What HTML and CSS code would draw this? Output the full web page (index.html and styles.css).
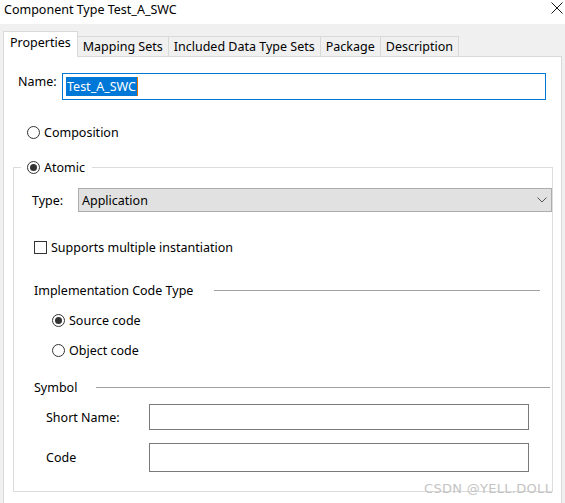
FILE: index.html
```html
<!doctype html>
<html>
  <head>
    <meta charset="UTF-8">
    <title>Component Type Test_A_SWC</title>
    <link rel="stylesheet" href="styles.css">
  </head>
  <body>
    <div class="window">
      <div class="titlebar">
        <span class="title">Component Type Test_A_SWC</span>
        <svg class="close" width="12" height="12" viewBox="0 0 12 12">
          <path d="M0.5 0.5 L11.5 11.5 M11.5 0.5 L0.5 11.5" stroke="#1a1a1a" stroke-width="1" fill="none"/>
        </svg>
      </div>

      <div class="dialog">
        <ul class="tabs">
          <li class="tab active">Properties</li>
          <li class="tab">Mapping Sets</li>
          <li class="tab">Included Data Type Sets</li>
          <li class="tab">Package</li>
          <li class="tab">Description</li>
        </ul>

        <div class="panel">
          <div class="nameRow">
            <label class="nameLabel">Name:</label>
            <div class="nameInput"><span class="selected">Test_A_SWC</span><span class="caret"></span></div>
          </div>

          <div class="radioRow composition">
            <span class="radio"></span>Composition
          </div>

          <fieldset class="atomic">
            <legend><span class="radio checked"></span>Atomic</legend>

            <div class="typeRow">
              <label class="typeLabel">Type:</label>
              <div class="select">
                <span>Application</span>
                <svg width="10" height="6" viewBox="0 0 10 6">
                  <path d="M0.5 0.5 L5 5 L9.5 0.5" stroke="#555" stroke-width="1" fill="none"/>
                </svg>
              </div>
            </div>

            <div class="checkRow">
              <span class="checkbox"></span>Supports multiple instantiation
            </div>

            <div class="sectionRow impl">
              <span>Implementation Code Type</span>
              <div class="rule"></div>
            </div>

            <div class="radioRow source">
              <span class="radio checked"></span>Source code
            </div>
            <div class="radioRow object">
              <span class="radio"></span>Object code
            </div>

            <div class="sectionRow symbol">
              <span>Symbol</span>
              <div class="rule"></div>
            </div>

            <div class="fieldRow shortName">
              <label>Short Name:</label>
              <div class="textBox"></div>
            </div>
            <div class="fieldRow code">
              <label>Code</label>
              <div class="textBox"></div>
            </div>
          </fieldset>

          <div class="watermark">CSDN @YELL.DOLL</div>
        </div>
      </div>
    </div>
  </body>
</html>
```

FILE: styles.css
```css
html, body {
  margin: 0;
  padding: 0;
}

body {
  width: 565px;
  height: 503px;
  overflow: hidden;
  background: #f0f0f0;
  font-family: "Noto Sans", "Open Sans", sans-serif;
  font-size: 12.5px;
  color: #000;
}

ul {
  list-style-type: none;
  margin: 0;
  padding: 0;
}

.window {
  display: flex;
  flex-direction: column;
  height: 503px;
}

.titlebar {
  height: 24px;
  background: white;
  display: flex;
  align-items: flex-start;
  justify-content: space-between;
  padding: 0 2px 0 4px;
}

.title {
  line-height: 20px;
}

.close {
  margin-top: 2px;
}

.dialog {
  flex: 1;
  display: flex;
  flex-direction: column;
  padding: 8px 3px 0 3px;
}

.tabs {
  display: flex;
  align-items: flex-end;
  height: 24px;
  position: relative;
  z-index: 1;
}

.tab {
  height: 19px;
  line-height: 19px;
  padding: 0 5px;
  border: 1px solid #d9d9d9;
  border-bottom: none;
  border-left: none;
  background: #f0f0f0;
}

.tab.active {
  height: 25px;
  line-height: 22px;
  padding: 0 6px;
  border-left: 1px solid #d9d9d9;
  background: white;
  margin-bottom: -1px;
}

.panel {
  flex: 1;
  position: relative;
  background: white;
  border: 1px solid #d9d9d9;
  border-bottom: none;
  padding-top: 16px;
}

.nameRow {
  display: flex;
  align-items: flex-start;
}

.nameLabel {
  width: 44px;
  padding-left: 14px;
  line-height: 16px;
  margin-top: 1px;
}

.nameInput {
  width: 479px;
  height: 25px;
  border: 1px solid #0078d7;
  display: flex;
  align-items: center;
  padding-left: 3px;
}

.selected {
  background: #0078d7;
  color: white;
  line-height: 19px;
  padding: 0 1px;
}

.caret {
  width: 1px;
  height: 19px;
  background: #e07000;
}

.radioRow {
  display: flex;
  align-items: center;
  height: 20px;
}

.radio {
  width: 11px;
  height: 11px;
  border: 1px solid #333;
  border-radius: 50%;
  margin-right: 4px;
  display: flex;
  align-items: center;
  justify-content: center;
  flex-shrink: 0;
}

.radio.checked::after {
  content: "";
  width: 7px;
  height: 7px;
  border-radius: 50%;
  background: #333;
}

.composition {
  margin-top: 22px;
  padding-left: 23px;
}

.atomic {
  margin: 15px 8px 0 9px;
  padding: 0 0 19px 0;
  border: 1px solid #dcdcdc;
  min-width: 0;
}

.atomic legend {
  display: flex;
  align-items: center;
  height: 20px;
  margin-left: 7px;
  padding: 0 7px 0 6px;
}

.typeRow {
  display: flex;
  align-items: center;
  margin-top: 11px;
}

.typeLabel {
  width: 46px;
  padding-left: 18px;
}

.select {
  flex: 1;
  height: 22px;
  background: #e1e1e1;
  border: 1px solid #adadad;
  display: flex;
  align-items: center;
  justify-content: space-between;
  padding: 0 4px 0 3px;
}

.checkRow {
  display: flex;
  align-items: center;
  height: 20px;
  margin-top: 25px;
  padding-left: 20px;
}

.checkbox {
  width: 11px;
  height: 11px;
  border: 1px solid #333;
  margin-right: 4px;
}

.sectionRow {
  display: flex;
  align-items: center;
  height: 20px;
  padding-left: 20px;
}

.sectionRow .rule {
  flex: 1;
  height: 1px;
  background: #a0a0a0;
}

.impl {
  margin-top: 23px;
  margin-right: 12px;
}

.impl .rule {
  margin-left: 21px;
}

.symbol {
  margin-top: 17px;
  margin-right: 2px;
}

.symbol .rule {
  margin-left: 19px;
}

.source {
  margin-top: 10px;
  padding-left: 38px;
}

.object {
  margin-top: 10px;
  padding-left: 38px;
}

.fieldRow {
  display: flex;
  align-items: center;
  padding-left: 32px;
  margin-right: 23px;
}

.fieldRow label {
  width: 103px;
}

.textBox {
  flex: 1;
  border: 1px solid #7a7a7a;
}

.shortName {
  margin-top: 7px;
}

.shortName .textBox {
  height: 24px;
}

.code {
  margin-top: 13px;
}

.code .textBox {
  height: 27px;
}

.watermark {
  position: absolute;
  left: 420px;
  top: 424px;
  font-family: "DejaVu Sans", sans-serif;
  font-size: 13px;
  color: #c4c4c4;
  letter-spacing: 0.3px;
}
```
